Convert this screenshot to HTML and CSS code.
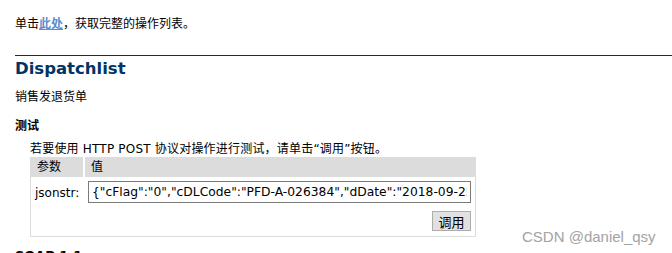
FILE: index.html
```html
<!DOCTYPE html>
<html>
<head>
<meta charset="utf-8">
<link rel="stylesheet" href="styles.css">
</head>
<body>
<div class="content">
  <p class="intro">单击<a href="#">此处</a>，获取完整的操作列表。</p>
  <h2>Dispatchlist</h2>
  <p class="desc">销售发退货单</p>
  <h3>测试</h3>
  <p class="frmtext">若要使用 HTTP POST 协议对操作进行测试，请单击“调用”按钮。</p>
  <table class="frm">
    <tr class="hdr">
      <td class="h1c">参数</td>
      <td class="h2c">值</td>
    </tr>
    <tr>
      <td class="lbl">jsonstr:</td>
      <td class="val"><input class="inp" type="text" value='{"cFlag":"0","cDLCode":"PFD-A-026384","dDate":"2018-09-25"}'></td>
    </tr>
    <tr>
      <td></td>
      <td class="btncell"><button class="btn">调用</button></td>
    </tr>
  </table>
  <h3 class="soap">SOAP 1.1</h3>
</div>
<div class="mark">CSDN @daniel_qsy</div>
</body>
</html>
```
FILE: styles.css
```css
html, body {
  margin: 0;
  padding: 0;
  background: #ffffff;
  overflow: hidden;
}
body {
  font-family: "DejaVu Sans", "Noto Sans CJK SC", sans-serif;
  font-size: 12px;
  color: #000;
  position: relative;
  height: 253px;
}
.content {
  padding-left: 15px;
}
.intro {
  margin: 0;
  padding-top: 17px;
  line-height: 14px;
}
.intro a {
  color: #5b8dcc;
  font-weight: bold;
  text-decoration: underline;
}
h2 {
  margin: 24px 0 0 0;
  border-top: 1px solid #003366;
  padding-top: 2px;
  font-size: 16.5px;
  line-height: 22px;
  color: #003366;
  font-weight: bold;
}
.desc {
  margin: 10px 0 0 0;
  line-height: 14px;
}
h3 {
  margin: 15px 0 0 0;
  font-size: 12px;
  line-height: 14px;
  font-weight: bold;
}
.frmtext {
  margin: 9px 0 0 15px;
  line-height: 14px;
  letter-spacing: 0.2px;
}
.frm {
  margin: 1px 0 0 15px;
  width: 446px;
  border-collapse: collapse;
  border: 1px solid #dcdcdc;
  border-top: none;
}
.frm td {
  padding: 0;
}
.hdr td {
  background: #dcdcdc;
  height: 20px;
  line-height: 20px;
  padding-left: 6px;
}
.hdr .h1c {
  width: 47px;
  border-right: 2px solid #ffffff;
}
.lbl {
  vertical-align: middle;
  padding-left: 4px !important;
  height: 31px;
  line-height: 14px;
}
.val {
  padding: 4px 4px 0 4px !important;
  vertical-align: top;
}
.inp {
  box-sizing: border-box;
  width: 383px;
  height: 22px;
  margin: 0;
  padding: 0 3px;
  border: 1px solid #7a7a7a;
  font-family: "DejaVu Sans", sans-serif;
  font-size: 12.3px;
  color: #000;
  outline: none;
}
.btncell {
  text-align: right;
  padding: 3px 4px 5px 0 !important;
}
.btn {
  box-sizing: border-box;
  height: 20px;
  width: 39px;
  margin: 0;
  padding: 0;
  background: #e1e1e1;
  border: 1px solid #adadad;
  font-family: "Noto Sans CJK SC", sans-serif;
  font-size: 13px;
  line-height: 17px;
  color: #000;
}
.soap {
  margin: 12px 0 0 0;
  font-size: 13px;
}
.mark {
  position: absolute;
  left: 522px;
  top: 228px;
  font-family: "Liberation Sans", Arial, sans-serif;
  font-size: 15px;
  line-height: 18px;
  color: #a3a3a3;
}
```
